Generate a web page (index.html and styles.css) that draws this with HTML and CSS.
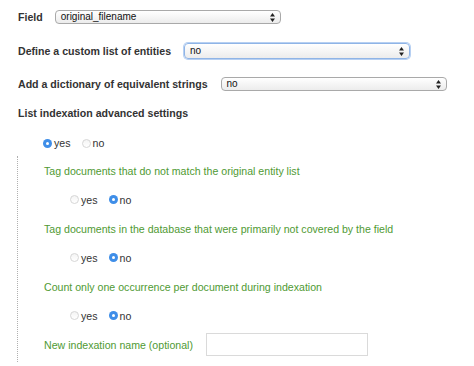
FILE: index.html
```html
<!DOCTYPE html>
<html>
<head>
<meta charset="utf-8">
<link rel="stylesheet" href="styles.css">
</head>
<body>
<div class="form">
  <div class="row r1">
    <span class="label">Field</span>
    <span class="select s-field">
      <span class="sel-text">original_filename</span>
      <svg class="arrows" width="5" height="9" viewBox="0 0 5 9"><path d="M2.5 0 L5 3.5 H0 Z M0 5.5 H5 L2.5 9 Z" fill="#222"/></svg>
    </span>
  </div>
  <div class="row r2">
    <span class="label">Define a custom list of entities</span>
    <span class="select s-entities focus">
      <span class="sel-text">no</span>
      <svg class="arrows" width="5" height="9" viewBox="0 0 5 9"><path d="M2.5 0 L5 3.5 H0 Z M0 5.5 H5 L2.5 9 Z" fill="#222"/></svg>
    </span>
  </div>
  <div class="row r3">
    <span class="label">Add a dictionary of equivalent strings</span>
    <span class="select s-dict">
      <span class="sel-text">no</span>
      <svg class="arrows" width="5" height="9" viewBox="0 0 5 9"><path d="M2.5 0 L5 3.5 H0 Z M0 5.5 H5 L2.5 9 Z" fill="#222"/></svg>
    </span>
  </div>
  <div class="row r4">
    <span class="label">List indexation advanced settings</span>
  </div>
  <div class="radios top-radios">
    <span class="radio on"></span><span class="opt">yes</span>
    <span class="radio"></span><span class="opt">no</span>
  </div>
  <div class="advanced">
    <div class="srow"><span class="green">Tag documents that do not match the original entity list</span></div>
    <div class="srow radios inner">
      <span class="radio"></span><span class="opt">yes</span>
      <span class="radio on"></span><span class="opt">no</span>
    </div>
    <div class="srow"><span class="green">Tag documents in the database that were primarily not covered by the field</span></div>
    <div class="srow radios inner">
      <span class="radio"></span><span class="opt">yes</span>
      <span class="radio on"></span><span class="opt">no</span>
    </div>
    <div class="srow"><span class="green">Count only one occurrence per document during indexation</span></div>
    <div class="srow radios inner">
      <span class="radio"></span><span class="opt">yes</span>
      <span class="radio on"></span><span class="opt">no</span>
    </div>
    <div class="srow name-row">
      <span class="green">New indexation name (optional)</span>
      <span class="text-input"></span>
    </div>
  </div>
</div>
</body>
</html>
```

FILE: styles.css
```css
html, body {
  margin: 0;
  padding: 0;
  background: #ffffff;
}
body {
  font-family: "Liberation Sans", Arial, sans-serif;
  color: #333333;
  width: 474px;
  height: 366px;
  overflow: hidden;
}
.form {
  padding-left: 18px;
}
.row {
  display: flex;
  align-items: center;
}
.r1 { height: 34px; }
.r2 { height: 34px; }
.r3 { height: 32px; }
.r4 { height: 26px; }
.label {
  font-weight: bold;
  font-size: 10.6px;
  color: #333333;
}
.select {
  position: relative;
  display: flex;
  align-items: center;
  box-sizing: border-box;
  height: 14px;
  border: 1px solid #a9a9a9;
  border-radius: 4px;
  background: linear-gradient(#ffffff, #ececec);
  font-size: 10px;
  color: #111;
  padding-left: 5px;
}
.sel-text {
  line-height: 12px;
}
.arrows {
  position: absolute;
  right: 5px;
  top: 2px;
}
.s-field {
  margin-left: 12px;
  width: 226px;
}
.s-entities {
  margin-left: 13px;
  width: 226px;
  height: 16px;
}
.s-entities .arrows { top: 3px; }
.focus {
  border-color: #8fb4e6;
  box-shadow: 0 0 0 1px #b7d0f2;
}
.s-dict {
  margin-left: 13px;
  width: 226px;
  height: 14px;
}
.radios {
  display: flex;
  align-items: center;
  font-size: 10.6px;
  color: #333;
}
.top-radios {
  height: 30px;
  padding-left: 25px;
  margin-top: 2px;
}
.radio {
  box-sizing: border-box;
  width: 9px;
  height: 9px;
  border-radius: 50%;
  border: 1px solid #d6d6d6;
  background: linear-gradient(#f4f4f4, #ffffff);
  margin-right: 2px;
  position: relative;
}
.radio.on {
  border: none;
  background: #3f8ee8;
}
.radio.on::after {
  content: "";
  position: absolute;
  left: 3px;
  top: 3px;
  width: 3px;
  height: 3px;
  border-radius: 50%;
  background: #ffffff;
}
.opt {
  margin-right: 11px;
}
.advanced {
  margin-left: -1px;
  border-left: 1px dotted #b0b0b0;
  padding-left: 26px;
  margin-top: -2px;
  height: 206px;
}
.srow {
  height: 29px;
  display: flex;
  align-items: center;
}
.green {
  color: #4f9a33;
  font-size: 10.6px;
}
.inner {
  padding-left: 26px;
}
.name-row .text-input {
  margin-left: 13px;
  width: 162px;
  height: 23px;
  box-sizing: border-box;
  border: 1px solid #dadada;
  background: #fff;
}
```
